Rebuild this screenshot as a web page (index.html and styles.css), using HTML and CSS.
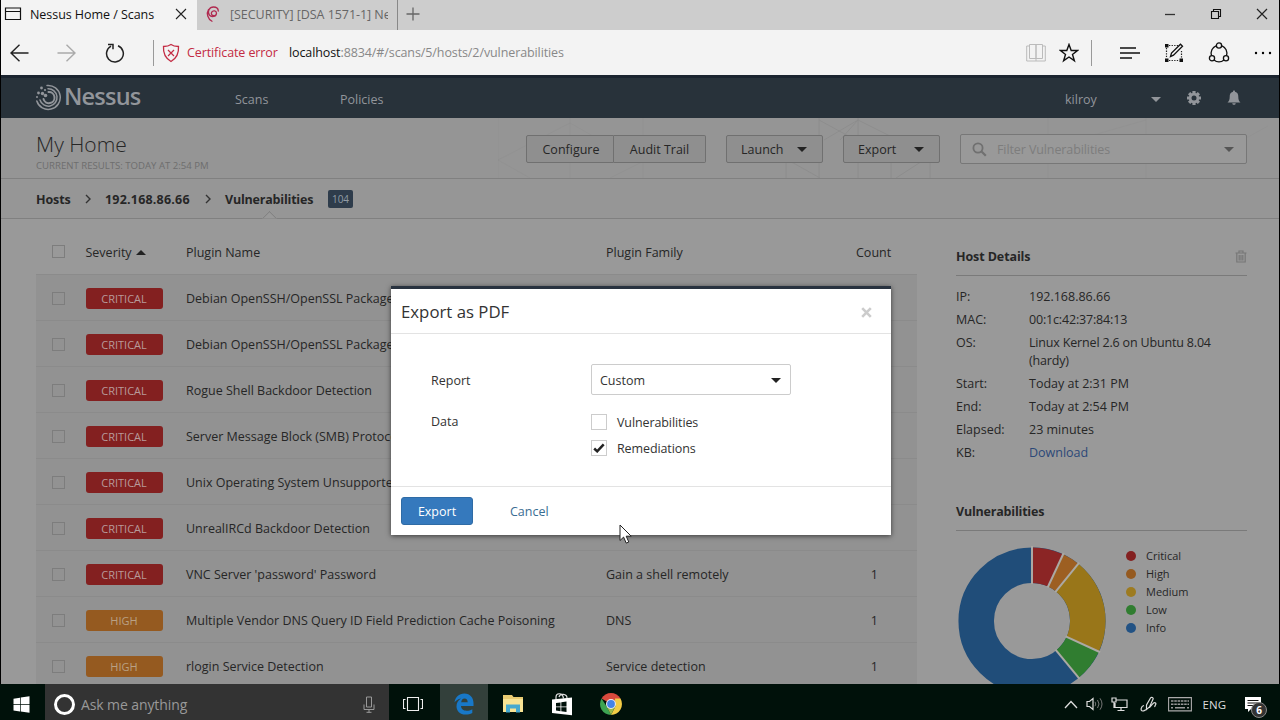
FILE: index.html
```
<!DOCTYPE html>
<html lang="en">
<head>
    <meta charset="utf-8">
    <title>Nessus Home / Scans</title>
    <link rel="stylesheet" href="styles.css">
</head>
<body>
<div class="screen">
    <div class="window">
        <!-- browser tabs -->
        <div class="tabs">
            <div class="tab active">
                <svg class="tab-icon" width="18" height="16" viewBox="0 0 18 16"><path d="M1.500 2h15v11.500h-15zM1.500 5.500h15" fill="none" stroke="#111" stroke-width="1.200"/></svg>
                <span class="tab-title">Nessus Home / Scans</span>
                <svg width="12" height="12" viewBox="0 0 12 12"><path d="M1 1l10 10M11 1L1 11" stroke="#222" stroke-width="1.100"/></svg>
            </div>
            <div class="tab second">
                <svg class="debian" width="16" height="18" viewBox="0 0 16 18"><path d="M9 10.500c-2 .3-3.300-1.700-2.300-3.400 1.600-2.300 5-1.200 4.800 1.300-.3 3.300-5 4.300-7.200 1.600C2 6.500 4.300 2 8.500 2c3 0 4.700 1.700 4.800 4M3.500 4.500c-2.500 4-.7 9.500 3.500 11.800" fill="none" stroke="#b02a50" stroke-width="1.300" stroke-linecap="round"/></svg>
                <span class="tab-title">[SECURITY] [DSA 1571-1] Ne</span>
            </div>
            <svg class="new-tab" width="14" height="14" viewBox="0 0 14 14"><path d="M7 .5v13M.5 7h13" stroke="#666" stroke-width="1.300"/></svg>
            <div class="win-buttons">
                <svg width="12" height="12" viewBox="0 0 12 12"><path d="M1 6.500h10" stroke="#333" stroke-width="1.300"/></svg>
                <svg width="12" height="12" viewBox="0 0 12 12"><path d="M1.500 3.500h7v7h-7zM3.500 3.500v-2h7v7h-2" fill="none" stroke="#111" stroke-width="1.100"/></svg>
                <svg width="12" height="12" viewBox="0 0 12 12"><path d="M1 1l10 10M11 1L1 11" stroke="#222" stroke-width="1.200"/></svg>
            </div>
        </div>

        <!-- address bar -->
        <div class="address">
            <svg class="back" width="20" height="18" viewBox="0 0 20 18"><path d="M19.500 9H2M10.500 .7L2 9l8.500 8.300" fill="none" stroke="#222" stroke-width="1.400"/></svg>
            <svg class="forward" width="20" height="18" viewBox="0 0 20 18"><path d="M.5 9h17.500M9.500 .7L18 9l-8.500 8.300" fill="none" stroke="#aaa" stroke-width="1.400"/></svg>
            <svg class="reload" width="20" height="20" viewBox="0 0 20 20"><path d="M6 3.200A8.400 8.400 0 1 0 13 2.800M3 1.400h5v4.800" fill="none" stroke="#222" stroke-width="1.500"/></svg>
            <div class="divider"></div>
            <svg class="shield" width="18" height="20" viewBox="0 0 18 20"><path d="M9 1.500c2 1.500 4.500 2 7.500 2 .5 7-1.500 11.500-7.500 15-6-3.500-8-8-7.500-15 3 0 5.500-.5 7.500-2z" fill="none" stroke="#c32b43" stroke-width="1.300"/><path d="M6 7l6 6M12 7l-6 6" stroke="#c32b43" stroke-width="1.200"/></svg>
            <span class="cert">Certificate error</span>
            <span class="url"><b>localhost</b>:8834/#/scans/5/hosts/2/vulnerabilities</span>
            <div class="tools">
                <svg class="reading" width="20" height="20" viewBox="0 0 20 20"><path d="M3.500 3H.7v15h18.600V3h-2.800M3.500 1.500H10v14H3.500zM10 1.500h6.500v14H10zM10 15v3" fill="none" stroke="#bbb"/></svg>
                <svg class="star" width="20" height="20" viewBox="0 0 20 20"><path d="M10 1.500l2.200 6h6.300l-5 3.900 1.900 6.300L10 14l-5.400 3.700 1.900-6.300-5-3.900h6.300z" fill="none" stroke="#111" stroke-width="1.400"/></svg>
                <div class="divider"></div>
                <svg class="hub" width="22" height="14" viewBox="0 0 22 14"><path d="M1 2h16M1 7h20M1 12h12" stroke="#111" stroke-width="1.400"/></svg>
                <svg class="note" width="20" height="20" viewBox="0 0 20 20"><path d="M5 2.500h9M2.500 5v10M5 17.500h10M17.500 8v7" stroke="#222" stroke-width="1.200" stroke-dasharray="1.300 1.300"/><path d="M1 1h3.500v3.500H1zM1 15.500h3.500V19H1zM15.500 15.500H19V19h-3.500z" fill="#111"/><path d="M6.500 13.500l1-3.500 9-8.800 2 2-9 9z" fill="#f3f3f3" stroke="#111" stroke-width="1.300"/></svg>
                <svg class="share" width="22" height="22" viewBox="0 0 22 22"><g fill="none" stroke="#111" stroke-width="1.300"><path d="M8 3.800A8 8 0 0 0 3.500 13.500M14 3.800a8 8 0 0 1 4.500 9.700M6 18a8 8 0 0 0 10 0"/><circle cx="11" cy="3.500" r="2.600"/><circle cx="4" cy="16.200" r="2.600"/><circle cx="18" cy="16.200" r="2.600"/></g></svg>
                <svg class="more" width="18" height="4" viewBox="0 0 18 4"><circle cx="2" cy="2" r="1.200"/><circle cx="9" cy="2" r="1.200"/><circle cx="16" cy="2" r="1.200"/></svg>
            </div>
        </div>

        <!-- Nessus header -->
        <div class="navbar">
            <svg class="logo-mark" width="27" height="27" viewBox="0 0 27 27"><g fill="none" stroke="#92959a" stroke-width="1.500" stroke-linecap="round"><path d="M12 1.500A12 12 0 1 1 1.800 17"/><path d="M13 4.800A8.700 8.700 0 1 1 5 16"/><path d="M13.500 8A5.600 5.600 0 1 1 8.500 15" stroke-width="2"/></g><g fill="#92959a"><circle cx="3.500" cy="9" r="1.400"/><circle cx="7.500" cy="9.500" r="1.700"/><circle cx="6.500" cy="4" r="1.400"/><circle cx="10" cy="6" r="1.100"/><circle cx="10.500" cy="11.500" r="1.800"/><circle cx="2" cy="13" r="1"/></g></svg>
            <span class="logo-text">Nessus</span>
            <span class="nav-scans">Scans</span>
            <span class="nav-policies">Policies</span>
            <div class="user">
                <span>kilroy</span>
                <i class="caret"></i>
                <svg class="gear" width="16" height="16" viewBox="0 0 16 16"><g stroke="#92959a" stroke-width="3.200"><path d="M8 1v14M1 8h14M3.100 3.100l9.800 9.800M12.900 3.100l-9.800 9.800"/></g><circle cx="8" cy="8" r="5.200" fill="#92959a"/><circle cx="8" cy="8" r="2.500" fill="#28323a"/></svg>
                <svg class="bell" width="14" height="16" viewBox="0 0 14 16"><path d="M7 .5c.8 0 1 .5 1 1.200 2.600.6 3.300 2.600 3.300 5 0 3 .7 4.300 2.200 5.800H.5C2 11 2.700 9.700 2.700 6.700c0-2.400.7-4.400 3.300-5C6 1 6.200.5 7 .5zM5.300 13.300h3.400c0 2-3.400 2-3.400 0z" fill="#92959a"/></svg>
            </div>
        </div>

        <div class="titlebar">
            <svg class="pattern" width="780" height="60" viewBox="0 0 780 60"><g fill="none" stroke="#8b8b8b" stroke-width=".8"><path d="M0 0v60M72 0v60M145 0v60M0 42l32 18M0 42L72 5l65 37M112 60l40-20" opacity=".35"/><path d="M288 40v20M321 0v60M360 0v60M393 40v20M432 40v20M326 22L360 2l40 20M321 2l70 38M290 42l32 18M398 60l34-22M360 2l-18 20"/><path d="M550 0v60M648 0v60M550 30l98-28M730 30l40-22" opacity=".35"/></g></svg>
            <div class="heading">
                <h1>My Home</h1>
                <p>CURRENT RESULTS: TODAY AT 2:54 PM</p>
            </div>
            <div class="actions">
                <div class="group">
                    <button class="configure">Configure</button>
                    <button class="audit">Audit Trail</button>
                </div>
                <button class="menu">Launch <i class="caret"></i></button>
                <button class="menu">Export <i class="caret"></i></button>
                <div class="filter">
                    <svg width="15" height="15" viewBox="0 0 15 15"><circle cx="6" cy="6" r="4.600" fill="none" stroke="#707070" stroke-width="1.800"/><path d="M9.500 9.500l4.300 4.300" stroke="#707070" stroke-width="2.200"/></svg>
                    <span>Filter Vulnerabilities</span>
                    <i class="caret"></i>
                </div>
            </div>
        </div>

        <div class="crumbs">
            <b>Hosts</b>
            <svg width="6" height="10" viewBox="0 0 6 10"><path d="M1 1l4 4-4 4" fill="none" stroke="#333" stroke-width="1.400"/></svg>
            <b class="crumb-ip">192.168.86.66</b>
            <svg width="6" height="10" viewBox="0 0 6 10"><path d="M1 1l4 4-4 4" fill="none" stroke="#333" stroke-width="1.400"/></svg>
            <b class="current">Vulnerabilities</b>
            <span class="badge">104</span>
        </div>

        <div class="content">
            <div class="table">
                <div class="row head">
                    <i class="box"></i>
                    <span class="sev">Severity <i class="caret up"></i></span>
                    <span class="name">Plugin Name</span>
                    <span class="family">Plugin Family</span>
                    <span class="count">Count</span>
                </div>
                <div class="row">
                    <i class="box"></i><span class="sev"><em class="critical">CRITICAL</em></span>
                    <span class="name">Debian OpenSSH/OpenSSL Package</span>
                </div>
                <div class="row">
                    <i class="box"></i><span class="sev"><em class="critical">CRITICAL</em></span>
                    <span class="name">Debian OpenSSH/OpenSSL Package</span>
                </div>
                <div class="row">
                    <i class="box"></i><span class="sev"><em class="critical">CRITICAL</em></span>
                    <span class="name">Rogue Shell Backdoor Detection</span>
                </div>
                <div class="row">
                    <i class="box"></i><span class="sev"><em class="critical">CRITICAL</em></span>
                    <span class="name">Server Message Block (SMB) Protoco</span>
                </div>
                <div class="row">
                    <i class="box"></i><span class="sev"><em class="critical">CRITICAL</em></span>
                    <span class="name">Unix Operating System Unsupported</span>
                </div>
                <div class="row">
                    <i class="box"></i><span class="sev"><em class="critical">CRITICAL</em></span>
                    <span class="name">UnrealIRCd Backdoor Detection</span>
                </div>
                <div class="row">
                    <i class="box"></i><span class="sev"><em class="critical">CRITICAL</em></span>
                    <span class="name">VNC Server 'password' Password</span>
                    <span class="family">Gain a shell remotely</span><span class="count">1</span>
                </div>
                <div class="row">
                    <i class="box"></i><span class="sev"><em class="high">HIGH</em></span>
                    <span class="name">Multiple Vendor DNS Query ID Field Prediction Cache Poisoning</span>
                    <span class="family">DNS</span><span class="count">1</span>
                </div>
                <div class="row">
                    <i class="box"></i><span class="sev"><em class="high">HIGH</em></span>
                    <span class="name">rlogin Service Detection</span>
                    <span class="family">Service detection</span><span class="count">1</span>
                </div>
            </div>

            <div class="side">
                <h2>Host Details
                    <svg width="12" height="13" viewBox="0 0 12 13"><path d="M.5 3h11M4 2.500V1h4v1.500M1.800 3v9h8.400V3M4.200 5v5.500M6 5v5.500M7.800 5v5.500" fill="none" stroke="#777" stroke-width="1.200"/></svg>
                </h2>
                <dl>
                    <dt>IP:</dt><dd>192.168.86.66</dd>
                    <dt>MAC:</dt><dd class="tight">00:1c:42:37:84:13</dd>
                    <dt>OS:</dt><dd class="tight">Linux Kernel 2.6 on Ubuntu 8.04<br>(hardy)</dd>
                    <dt>Start:</dt><dd>Today at 2:31 PM</dd>
                    <dt>End:</dt><dd>Today at 2:54 PM</dd>
                    <dt>Elapsed:</dt><dd>23 minutes</dd>
                    <dt>KB:</dt><dd><a>Download</a></dd>
                </dl>
                <h2 class="chart-title">Vulnerabilities</h2>
                <div class="chart">
                    <svg width="150" height="150" viewBox="-75 -75 150 150">
                        <g transform="rotate(-90)" fill="none" stroke-width="35.500">
                            <circle r="55.800" pathLength="360" stroke="#204d79"/>
                            <circle r="55.800" pathLength="360" stroke="#8b2525" stroke-dasharray="25 335"/>
                            <circle r="55.800" pathLength="360" stroke="#9d5f22" stroke-dasharray="14 346" stroke-dashoffset="-25"/>
                            <circle r="55.800" pathLength="360" stroke="#997619" stroke-dasharray="75.600 284.400" stroke-dashoffset="-39"/>
                            <circle r="55.800" pathLength="360" stroke="#307d30" stroke-dasharray="26 334" stroke-dashoffset="-114.600"/>
                        </g>
                        <g stroke="#aba9a4" stroke-width="2">
                            <path d="M0-37v-38"/>
                            <path d="M0-37v-38" transform="rotate(25)"/>
                            <path d="M0-37v-38" transform="rotate(39)"/>
                            <path d="M0-37v-38" transform="rotate(114.600)"/>
                            <path d="M0-37v-38" transform="rotate(140.600)"/>
                        </g>
                    </svg>
                    <ul>
                        <li><i class="critical"></i>Critical</li>
                        <li><i class="high"></i>High</li>
                        <li><i class="medium"></i>Medium</li>
                        <li><i class="low"></i>Low</li>
                        <li><i class="info"></i>Info</li>
                    </ul>
                </div>
            </div>
        </div>
    </div>

    <!-- taskbar -->
    <div class="taskbar">
        <div class="start"><svg width="17" height="17" viewBox="0 0 17 17"><path d="M.5 2.700l6.500-1v6.500H.5zM7.700 1.600L16.500.3v7.900H7.700zM.5 8.900H7v6.500l-6.500-1zM7.700 8.900h8.800v7.900l-8.800-1.300z" fill="#fff"/></svg></div>
        <div class="search">
            <i class="cortana"></i>
            <span>Ask me anything</span>
            <svg width="12" height="17" viewBox="0 0 12 17"><path d="M3.500 1h5v10h-5zM1 8.500v5h10v-5M6 13.500v3M3.500 16.300h5" fill="none" stroke="#999"/></svg>
        </div>
        <div class="task view"><svg width="20" height="16" viewBox="0 0 20 16"><path d="M4.500 1.500h11v13h-11zM2.500 3.500h-2v9h2M17.500 3.500h2v9h-2" fill="none" stroke="#eee" stroke-width="1.100"/></svg></div>
        <div class="task edge"><svg width="20" height="22" viewBox="0 0 20 22"><path d="M.5 9.500C1.300 4 5 .5 10.300.5c6 0 9.200 4.500 9.200 9.800V13H7c.1 3 2.500 4.700 5.500 4.700 2.200 0 4-.5 5.800-1.500V20c-2 1.200-4.300 1.600-6.800 1.600C6 21.600 2.500 18 2.500 13.300c0-3.500 1.700-6 4.500-7.800-3 .5-5 2-6.500 4zM7.200 9.300h6.500c0-2.300-1.100-3.700-3.200-3.700-1.900 0-3.100 1.500-3.300 3.700z" fill="#1878c8"/></svg></div>
        <div class="task"><svg width="22" height="20" viewBox="0 0 22 20"><path d="M1 1h9l1.500 2H21v15H1z" fill="#e8cb72"/><path d="M1 5h20v13H1z" fill="#f7e394"/><path d="M4 18.500v-8h14v8h-4v-4H8v4z" fill="#46a9cf"/></svg></div>
        <div class="task"><svg width="22" height="24" viewBox="0 0 22 24"><path d="M5 8V5c0-4 6-4.500 7-.5l.5 2M8 5c1-4 8-3.500 8 1" fill="none" stroke="#ddd" stroke-width="1.200"/><path d="M1 7.500l20-2v17.700L1 21z" fill="#fff"/><path d="M5 11l4.500-.6v4H5zM10.300 10.300l5.200-.7v4.800h-5.200zM5 15.200h4.500v4l-4.500-.6zM10.300 15.200h5.200V20l-5.200-.7z" fill="#00110a"/></svg></div>
        <div class="task"><svg width="22" height="22" viewBox="-11 -11 22 22"><path d="M0 0L-9.500-5.500A11 11 0 0 1 9.500-5.500z" fill="#d94a3d"/><path d="M-9.500-5.500L-4.300 2.500 0 11A11 11 0 0 1-9.500-5.500z" fill="#3da352"/><path d="M0 11L4.300 2.500 4-5.500h5.500A11 11 0 0 1 0 11z" fill="#f3cc45"/><path d="M-4.300 2.500L0 11 4.300 2.500z" fill="#9aba4c"/><circle r="5" fill="#eee"/><circle r="3.900" fill="#4583e8"/></svg></div>
        <div class="tray">
            <svg width="14" height="9" viewBox="0 0 14 9"><path d="M1 8l6-6.500L13 8" fill="none" stroke="#ddd" stroke-width="1.300"/></svg>
            <svg class="sound" width="17" height="14" viewBox="0 0 17 14"><path d="M1 4.500h2.500L7 1.500v11L3.500 9.500H1z" fill="none" stroke="#ddd" stroke-width="1.200"/><path d="M9 4.800q1.500 2.200 0 4.400M11.500 3q3 4 0 8M14 1.300q4 5.700 0 11.400" fill="none" stroke="#777"/></svg>
            <svg class="net" width="17" height="15" viewBox="0 0 17 15"><path d="M5 3h11v7.500H4V6M10 10.500v3M6.500 13.500h7M1 1h4v4H1zM3 5v6" fill="none" stroke="#ddd" stroke-width="1.200"/></svg>
            <svg class="pen" width="17" height="17" viewBox="0 0 17 17"><path d="M6.500 13.500V9L10.500 2c1-1.500 3.200-.3 2.500 1.300L9.500 11zM4 9.500c-3 .5-4 5.500-1.300 5.500 2 0 2.300-1.500 3.800-1.500M9.500 11.500C12 9 14 5.500 15.500 7s-1.500 2.500-.5 4" fill="none" stroke="#ddd" stroke-width="1.200"/></svg>
            <svg class="keys" width="24" height="15" viewBox="0 0 24 15"><path d="M.6.600h22.800v13.300H.6z" fill="none" stroke="#aaa" stroke-width="1.100"/><path d="M3 4h18M3 7.200h18" stroke="#999" stroke-width="1.500" stroke-dasharray="2.500 .8"/><path d="M3 10.700h2M7 10.700h10M19 10.700h2" stroke="#999" stroke-width="1.500"/></svg>
            <span>ENG</span>
            <div class="notify">
                <svg width="18" height="17" viewBox="0 0 18 17"><path d="M1 1h16v12H7l-3 3v-3H1z" fill="#fff"/><path d="M3.500 4.500h11M3.500 7h11M3.500 9.500h7" stroke="#111"/></svg>
                <b>6</b>
            </div>
        </div>
    </div>

    <!-- export dialog -->
    <div class="modal">
        <div class="modal-head">
            <h3>Export as PDF</h3>
            <svg width="11" height="11" viewBox="0 0 11 11"><path d="M1.200 1.200l8.600 8.600M9.800 1.200L1.200 9.800" stroke="#ccc" stroke-width="2.600"/></svg>
        </div>
        <div class="modal-body">
            <label class="report">Report</label>
            <div class="select">Custom <i class="caret"></i></div>
            <label>Data</label>
            <div class="checks">
                <div><i class="box"></i>Vulnerabilities</div>
                <div><i class="box"><svg width="12" height="10" viewBox="0 0 12 10"><path d="M1.200 5.500l3 2.800 6.500-7" fill="none" stroke="#222" stroke-width="2.500"/></svg></i>Remediations</div>
            </div>
        </div>
        <div class="modal-foot">
            <button class="export">Export</button>
            <a>Cancel</a>
        </div>
    </div>
    <svg class="cursor" width="14" height="21" viewBox="0 0 14 21"><path d="M1 1v15.500l3.600-3.400 2.600 6 2.600-1.100-2.600-5.800h5z" fill="#fff" stroke="#222"/></svg>
</div>
</body>
</html>
```
FILE: styles.css
```
* {
    box-sizing: border-box;
}
body {
    margin: 0;
    font-family: "Open Sans", "Noto Sans", sans-serif;
    font-size: 12.5px;
    color: #262626;
    background: #000;
}
svg {
    display: block;
    flex: none;
}
button {
    font: inherit;
    color: inherit;
    padding: 0;
}
i, em {
    font-style: normal;
}
.screen {
    position: relative;
    width: 1280px;
    height: 720px;
    overflow: hidden;
}
.window {
    height: 684px;
    margin: 0 1px;
    background: #999;
    overflow: hidden;
}
.caret {
    border: 5px solid transparent;
    border-top-color: #222;
    border-bottom: 0;
}
.caret.up {
    border-top: 0;
    border-bottom: 5px solid #222;
}

/* browser */
.tabs {
    display: flex;
    align-items: center;
    height: 30px;
    padding-bottom: 2px;
    background: #cdcdcd;
    color: #111;
}
.tab {
    display: flex;
    align-items: center;
    height: 30px;
    margin-bottom: -2px;
    padding-bottom: 2px;
}
.tab.active {
    width: 196px;
    padding-left: 3px;
    background: #f3f3f3;
}
.tab.active .tab-title {
    width: 145px;
    margin-left: 8px;
    letter-spacing: -.05px;
}
.tab.second {
    width: 201px;
    padding-left: 8px;
    color: #666;
    border-right: 1px solid #888;
}
.tab.second .tab-title {
    width: 158px;
    margin-left: 9px;
    overflow: hidden;
    letter-spacing: -.05px;
}
.tab-title {
    white-space: nowrap;
}
.new-tab {
    margin-left: 8px;
}
.win-buttons {
    display: flex;
    gap: 34px;
    margin-left: auto;
    padding-right: 11px;
}
.address {
    display: flex;
    align-items: center;
    height: 45px;
    padding-left: 8px;
    background: #f3f3f3;
    white-space: nowrap;
}
.forward {
    margin-left: 28px;
}
.reload {
    margin-left: 28px;
}
.divider {
    width: 1px;
    height: 26px;
    background: #999;
}
.address > .divider {
    margin-left: 28px;
}
.shield {
    margin-left: 8px;
}
.cert {
    width: 102px;
    margin-left: 7px;
    color: #c32b43;
    letter-spacing: -.1px;
}
.url {
    color: #888;
    letter-spacing: -.1px;
}
.url b {
    font-weight: 400;
    color: #111;
}
.tools {
    display: flex;
    align-items: center;
    margin-left: auto;
    padding-right: 7px;
}
.star {
    margin: 0 12px;
}
.reading {
    margin-right: 1px;
}
.hub {
    margin-left: 27px;
}
.note {
    margin-left: 23px;
}
.share {
    margin: 0 24px;
}

/* nessus header */
.navbar {
    display: flex;
    align-items: center;
    height: 43px;
    padding: 2px 38px 0 34px;
    border-top: 3px solid #1b242f;
    background: #28323a;
    color: #92959a;
}
.logo-mark {
    margin-top: -4px;
}
.logo-text {
    width: 80px;
    margin: -6px 0 0 2px;
    font: 600 23.5px "Open Sans", sans-serif;
    letter-spacing: -.8px;
}
.nav-scans {
    width: 105px;
    margin-left: 91px;
}
.user {
    display: flex;
    align-items: center;
    margin-left: auto;
}
.user span {
    width: 86px;
}
.user .caret {
    border-top-color: #92959a;
}
.gear {
    margin: -2px 25px 0 25px;
}
.bell {
    margin-top: -2px;
}
.titlebar {
    position: relative;
    display: flex;
    justify-content: space-between;
    height: 61px;
    padding: 0 32px 0 35px;
    border-bottom: 1px solid #808080;
    background: #959595;
}
.pattern {
    position: absolute;
    left: 497px;
    top: 0;
}
.heading h1 {
    margin: 11px 0 0;
    font-size: 21px;
    font-weight: 300;
    line-height: 30px;
}
.heading p {
    margin: 1px 0 0;
    font-size: 9.6px;
    line-height: 11px;
    color: #6e6e6e;
}
.actions {
    position: relative;
    display: flex;
    padding-top: 17px;
}
.actions button {
    height: 28px;
    border: 1px solid #707070;
    background: #8f8f8f;
}
.group {
    display: flex;
    margin-right: 20px;
}
.actions .configure {
    width: 88px;
    padding-left: 2px;
    border-radius: 2px 0 0 2px;
}
.actions .audit {
    width: 92px;
    border-left: 0;
    border-radius: 0 2px 2px 0;
}
.actions .menu {
    display: flex;
    align-items: center;
    justify-content: space-between;
    width: 97px;
    margin-right: 20px;
    padding: 0 15px 0 14px;
    border-radius: 2px;
}
.filter {
    display: flex;
    align-items: center;
    width: 287px;
    height: 30px;
    margin-top: -1px;
    padding: 0 12px 0 11px;
    border: 1px solid #777;
    border-radius: 2px;
    background: #999;
    color: #7d7d7d;
}
.filter span {
    margin: 0 auto 0 10px;
    letter-spacing: -.1px;
}
.filter .caret {
    border-top-color: #555;
}
.crumbs {
    display: flex;
    align-items: center;
    height: 40px;
    padding: 1px 0 0 35px;
    border-bottom: 1px solid #808080;
    background: #969696;
}
.crumbs b {
    width: 49px;
    letter-spacing: -.1px;
}
.crumbs .crumb-ip {
    width: 100px;
    margin-left: 14px;
    letter-spacing: .2px;
}
.crumbs .current {
    position: relative;
    width: 103px;
    margin-left: 14px;
    letter-spacing: -.2px;
}
.current::after {
    content: "";
    position: absolute;
    left: 39px;
    top: 22px;
    width: 10px;
    height: 10px;
    border: 1px solid #808080;
    border-right: 0;
    border-bottom: 0;
    background: #999;
    transform: rotate(45deg);
    clip-path: polygon(0 0, 100% 0, 0 100%);
}
.badge {
    width: 25px;
    height: 18px;
    border-radius: 2px;
    background: #2e3c4b;
    color: #929ca6;
    font-size: 10px;
    line-height: 18px;
    text-align: center;
}

/* table and side column */
.content {
    display: flex;
    padding-left: 35px;
}
.table {
    width: 881px;
    flex: none;
}
.row {
    display: flex;
    align-items: center;
    height: 46px;
    padding: 2px 0 0 16px;
    border-bottom: 1px solid #8b8b8b;
    background: #929292;
}
.row.head {
    height: 56px;
    padding-top: 11px;
    background: none;
}
.box {
    width: 13px;
    height: 13px;
    border: 1px solid #7d7d7d;
}
.row .box {
    margin-top: -1px;
}
.sev {
    display: flex;
    align-items: center;
    gap: 4px;
    width: 101px;
    margin-left: 20px;
    padding-left: .5px;
}
.sev em {
    width: 77px;
    height: 21px;
    margin-top: -1px;
    border-radius: 3px;
    color: #b89a9a;
    font-size: 11px;
    line-height: 21px;
    text-align: center;
}
.critical {
    background: #832020;
}
.high {
    background: #955a20;
}
.sev .high {
    color: #b9a184;
}
.medium {
    background: #9d7b20;
}
.low {
    background: #307d30;
}
.info {
    background: #225284;
}
.name {
    width: 420px;
    white-space: nowrap;
}
.family {
    width: 240px;
}
.count {
    width: 54px;
    padding-right: 22px;
    text-align: right;
    white-space: nowrap;
}
.head .count {
    padding-right: 0;
    text-align: left;
    margin-left: 10px;
}
.side {
    width: 291px;
    margin-left: 39px;
}
.side h2 {
    display: flex;
    align-items: center;
    justify-content: space-between;
    height: 39px;
    margin: 18px 0 0;
    border-bottom: 1px solid #7a7a7a;
    font-size: 12.5px;
    letter-spacing: -.1px;
}
dl {
    display: grid;
    grid-template-columns: 73px 1fr;
    row-gap: 5px;
    margin: 12px 0 0;
    line-height: 18px;
}
dd {
    margin: 0;
}
dd.tight {
    letter-spacing: -.17px;
}
dd a {
    color: #2c4878;
}
.side .chart-title {
    margin-top: 30px;
    letter-spacing: -.2px;
}
.chart {
    display: flex;
    padding: 15px 0 0 1px;
}
.chart ul {
    margin: 1px 0 0 19px;
    padding: 0;
    list-style: none;
    font-size: 11px;
    line-height: 18px;
}
.chart li {
    display: flex;
    align-items: center;
    gap: 10px;
}
.chart li i {
    width: 10px;
    height: 10px;
    border-radius: 50%;
}

/* taskbar */
.taskbar {
    display: flex;
    height: 36px;
    padding-left: 1px;
    background: #00110a;
    color: #ddd;
}
.start {
    width: 44px;
    padding: 12px 0 0 12px;
}
.search {
    display: flex;
    align-items: center;
    width: 344px;
    padding: 4px 14px 0 9px;
    background: #333;
    color: #999;
    font-size: 14px;
    letter-spacing: -.1px;
}
.cortana {
    width: 21px;
    height: 21px;
    margin-right: 6px;
    border: 3px solid #fff;
    border-radius: 50%;
}
.search svg {
    margin-left: auto;
}
.task {
    display: flex;
    align-items: center;
    justify-content: center;
    width: 49px;
    padding-top: 4px;
}
.task.view {
    width: 51px;
    padding-right: 3px;
}
.task.edge {
    width: 48px;
    background: #33403b;
}
.tray {
    display: flex;
    align-items: center;
    margin-left: auto;
    padding: 4px 12px 0 0;
    font-size: 11.5px;
}
.sound {
    margin-left: 8px;
}
.net {
    margin-left: 8px;
}
.pen {
    margin-left: 12px;
}
.keys {
    margin: 0 11px 0 11px;
}
.notify {
    position: relative;
    margin-left: 18px;
    padding-right: 6px;
}
.notify b {
    position: absolute;
    left: 7px;
    top: 6px;
    width: 16px;
    height: 16px;
    border: 1px solid #888;
    border-radius: 50%;
    background: #333;
    color: #fff;
    font-size: 10px;
    line-height: 14px;
    text-align: center;
}

/* dialog */
.modal {
    position: absolute;
    left: 391px;
    top: 286px;
    width: 500px;
    height: 249px;
    border-top: 3px solid #28323f;
    background: #fff;
    color: #333;
    box-shadow: 0 1px 5px rgba(0, 0, 0, .6);
}
.modal-head {
    display: flex;
    align-items: center;
    justify-content: space-between;
    height: 45px;
    padding: 2px 19px 0 10px;
    border-bottom: 1px solid #e3e3e3;
}
.modal h3 {
    margin: -2px 0 0;
    font-size: 16.8px;
    font-weight: 400;
}
.modal-body {
    display: grid;
    grid-template-columns: 160px 200px;
    align-content: start;
    height: 153px;
    padding: 30px 40px 0;
    border-bottom: 1px solid #e3e3e3;
}
.report {
    line-height: 34px;
}
.modal label {
    height: 49px;
}
.select {
    display: flex;
    align-items: center;
    justify-content: space-between;
    height: 31px;
    padding: 1px 9px 0 8px;
    border: 1px solid #ccc;
    border-radius: 2px;
}
.checks {
    margin-top: -1px;
    letter-spacing: -.1px;
}
.checks div {
    display: flex;
    align-items: center;
    height: 20px;
    margin-bottom: 6px;
}
.checks .box {
    width: 16px;
    height: 16px;
    margin-right: 10px;
    padding: 2px 1px;
    border-color: #ccc;
}
.modal-foot {
    display: flex;
    align-items: center;
    padding: 10px;
}
.modal-foot a {
    margin-left: 37px;
    color: #3a6d93;
}
.export {
    width: 72px;
    height: 28px;
    border: 1px solid #2f6ba5;
    border-radius: 3px;
    background: #3579bd;
    color: #fff;
}
.cursor {
    position: absolute;
    left: 619px;
    top: 524px;
}
```
